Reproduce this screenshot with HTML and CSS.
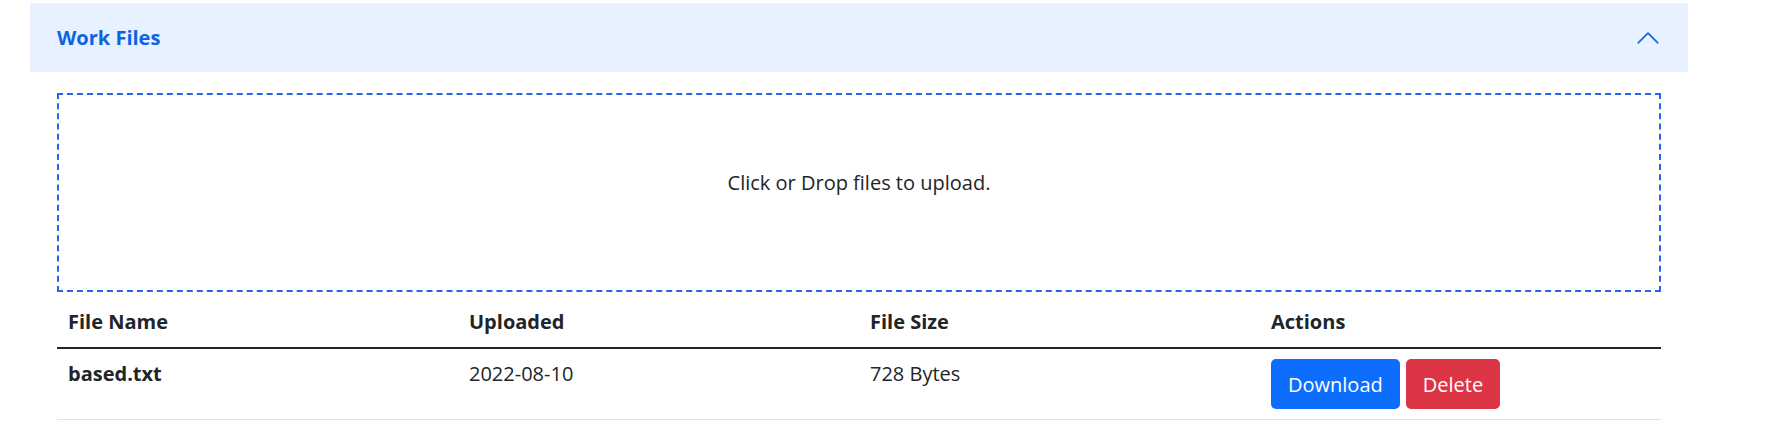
FILE: index.html
```html
<!DOCTYPE html>
<html>
<head>
    <title>Work Files</title>
    <link rel="stylesheet" href="styles.css">
</head>
<body>
    <div class="accordion">
        <div class="accordion-header">
            <span class="accordion-title">Work Files</span>
            <svg class="chevron" viewBox="0 0 16 16" width="26" height="26">
                <path d="M1.646 4.646a.5.5 0 0 1 .708 0L8 10.293l5.646-5.647a.5.5 0 0 1 .708.708l-6 6a.5.5 0 0 1-.708 0l-6-6a.5.5 0 0 1 0-.708z" transform="rotate(180 8 8)"/>
            </svg>
        </div>
        <div class="accordion-body">
            <div class="dropzone">Click or Drop files to upload.</div>
            <table class="files">
                <thead>
                    <tr>
                        <th>File Name</th>
                        <th>Uploaded</th>
                        <th>File Size</th>
                        <th>Actions</th>
                    </tr>
                </thead>
                <tbody>
                    <tr>
                        <td class="name">based.txt</td>
                        <td>2022-08-10</td>
                        <td>728 Bytes</td>
                        <td>
                            <div class="actions">
                                <button class="btn btn-primary">Download</button>
                                <button class="btn btn-danger">Delete</button>
                            </div>
                        </td>
                    </tr>
                </tbody>
            </table>
        </div>
    </div>
</body>
</html>
```

FILE: styles.css
```css
body {
    margin: 3px 0 0 30px;
    font-family: 'Open Sans', 'Noto Sans', sans-serif;
    font-size: 20px;
    color: #212529;
    background-color: #fff;
}
.accordion {
    width: 1658px;
}
.accordion-header {
    display: flex;
    align-items: center;
    justify-content: space-between;
    height: 69px;
    padding: 0 27px;
    background-color: #e7f1ff;
}
.accordion-title {
    color: #0c63e4;
    font-weight: 700;
}
.chevron {
    fill: #0c63e4;
}
.accordion-body {
    padding: 21px 27px 0 27px;
}
.dropzone {
    display: flex;
    align-items: center;
    justify-content: center;
    height: 175px;
    padding-bottom: 20px;
    border: 2px dashed #2563f0;
    margin-bottom: 5px;
}
.files {
    width: 100%;
    border-collapse: collapse;
    table-layout: fixed;
}
.files th, .files td {
    padding: 10px 11px;
    line-height: 30px;
    text-align: left;
    vertical-align: top;
}
.files th {
    font-weight: 700;
    border-bottom: 2px solid #212529;
}
.files td {
    border-bottom: 1px solid #dee2e6;
}
.files td.name {
    font-weight: 700;
}
.actions {
    display: flex;
    gap: 6px;
}
.btn {
    height: 50px;
    padding: 0 17px;
    border: none;
    border-radius: 5px;
    color: #fff;
    font-family: inherit;
    font-size: 20px;
    cursor: pointer;
}
.btn-primary {
    background-color: #0d6efd;
}
.btn-danger {
    background-color: #dc3545;
}
```
